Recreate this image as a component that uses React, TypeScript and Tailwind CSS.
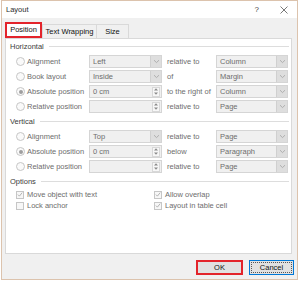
import React from 'react';

const labelCls = 'text-[#6d6d6d]';

function Chevron() {
    return (
        <svg width="7" height="5" viewBox="0 0 7 5">
            <path d="M1 1.2 L3.5 3.6 L6 1.2" fill="none" stroke="#a8a8a8" strokeWidth="0.9" />
        </svg>
    );
}

function Spinner() {
    return (
        <svg width="6" height="9" viewBox="0 0 6 9">
            <path d="M1 3.5 L3 1.2 L5 3.5 Z" fill="#8a8a8a" />
            <path d="M1 5.5 L3 7.8 L5 5.5 Z" fill="#8a8a8a" />
        </svg>
    );
}

function Select({ value, width }: { value: string; width: string }) {
    return (
        <div className={`${width} h-[13px] border border-[#d5d5d5] bg-[#f0f0f0] flex`}>
            <span className={`flex-1 pl-[3px] leading-[11px] ${labelCls}`}>{value}</span>
            <div className="w-[11px] h-[11px] bg-[#dedede] border-l border-[#d0d0d0] flex items-center justify-center">
                <Chevron />
            </div>
        </div>
    );
}

function SpinInput({ value }: { value: string }) {
    return (
        <div className="w-[73px] h-[13px] border border-[#d5d5d5] bg-[#f0f0f0] flex">
            <span className={`flex-1 pl-[3px] leading-[11px] ${labelCls}`}>{value}</span>
            <div className="w-[11px] h-[11px] flex items-center justify-center">
                <div className="w-[8px] h-[10px] border border-[#d8d8d8] bg-[#f7f7f7] flex items-center justify-center">
                    <Spinner />
                </div>
            </div>
        </div>
    );
}

function Radio({ checked }: { checked?: boolean }) {
    return (
        <div className="w-[9px] h-[9px] rounded-full border border-[#c6c6c6] bg-[#fafafa] flex items-center justify-center">
            {checked && <div className="w-[4px] h-[4px] rounded-full bg-[#9f9f9f]" />}
        </div>
    );
}

function Check({ checked }: { checked?: boolean }) {
    return (
        <div className="w-[8px] h-[8px] border border-[#c6c6c6] bg-[#f7f7f7] flex items-center justify-center">
            {checked && (
                <svg width="7" height="7" viewBox="0 0 7 7">
                    <path d="M1 3.6 L2.8 5.4 L6 1.4" fill="none" stroke="#a0a0a0" strokeWidth="0.9" />
                </svg>
            )}
        </div>
    );
}

function Header({ title }: { title: string }) {
    return (
        <div className="h-[15px] flex items-center pl-[4px] pr-[2px]">
            <span className="text-[#3b3b3b]">{title}</span>
            <div className="flex-1 h-px bg-[#dddddd] ml-[5px]" />
        </div>
    );
}

function Row({ label, checked, field, middle, right }: { label: string; checked?: boolean; field: React.ReactNode; middle: string; right: string }) {
    return (
        <div className="h-[15px] flex items-center pl-[10px]">
            <div className="w-[73px] flex items-center gap-[2px]">
                <Radio checked={checked} />
                <span className={labelCls}>{label}</span>
            </div>
            {field}
            <div className={`w-[54px] pl-[5px] ${labelCls}`}>{middle}</div>
            <Select value={right} width="w-[72px]" />
        </div>
    );
}

export default function App() {
    return (
        <div className="w-[300px] h-[281px] bg-white text-[7.5px] leading-none" style={{ fontFamily: '"Liberation Sans", Arial, sans-serif' }}>
            <div className="ml-[1px] w-[297px] h-[280px] border border-[#dcc3ad] bg-[#f0f0f0] flex flex-col">
                {/* Title bar */}
                <div className="h-[17px] bg-white flex items-center pl-[4px]">
                    <span className="text-[#2b2b2b]">Layout</span>
                    <span className="ml-auto text-[#444] text-[8px]">?</span>
                    <svg className="ml-[21px] mr-[9px]" width="8" height="8" viewBox="0 0 8 8">
                        <path d="M0.5 0.5 L7.5 7.5 M7.5 0.5 L0.5 7.5" stroke="#555" strokeWidth="0.8" />
                    </svg>
                </div>

                {/* Tabs */}
                <div className="mt-[5px] h-[15px] flex items-end pl-[3px]">
                    <div className="w-[37px] h-[16px] border-2 border-[#e3242b] bg-white flex items-center justify-center text-[#111] relative z-10">
                        Position
                    </div>
                    <div className="w-[55px] h-[14px] border border-b-0 border-[#d9d9d9] bg-[#f0f0f0] flex items-center justify-center text-[#111]">
                        Text Wrapping
                    </div>
                    <div className="w-[32px] h-[14px] border border-b-0 border-l-0 border-[#d9d9d9] bg-[#f0f0f0] flex items-center justify-center text-[#111]">
                        Size
                    </div>
                </div>

                {/* Panel */}
                <div className="ml-[3px] w-[287px] h-[216px] border border-[#d9d9d9] bg-white flex flex-col">
                    <Header title="Horizontal" />
                    <Row label="Alignment" field={<Select value="Left" width="w-[73px]" />} middle="relative to" right="Column" />
                    <Row label="Book layout" field={<Select value="Inside" width="w-[73px]" />} middle="of" right="Margin" />
                    <Row label="Absolute position" checked field={<SpinInput value="0 cm" />} middle="to the right of" right="Column" />
                    <Row label="Relative position" field={<SpinInput value="" />} middle="relative to" right="Page" />

                    <Header title="Vertical" />
                    <Row label="Alignment" field={<Select value="Top" width="w-[73px]" />} middle="relative to" right="Page" />
                    <Row label="Absolute position" checked field={<SpinInput value="0 cm" />} middle="below" right="Paragraph" />
                    <Row label="Relative position" field={<SpinInput value="" />} middle="relative to" right="Page" />

                    <Header title="Options" />
                    <div className="h-[11px] flex items-center pl-[10px]">
                        <div className="w-[138px] flex items-center gap-[3px]">
                            <Check checked />
                            <span className={labelCls}>Move object with text</span>
                        </div>
                        <div className="flex items-center gap-[3px]">
                            <Check checked />
                            <span className={labelCls}>Allow overlap</span>
                        </div>
                    </div>
                    <div className="h-[11px] flex items-center pl-[10px]">
                        <div className="w-[138px] flex items-center gap-[3px]">
                            <Check />
                            <span className={labelCls}>Lock anchor</span>
                        </div>
                        <div className="flex items-center gap-[3px]">
                            <Check checked />
                            <span className={labelCls}>Layout in table cell</span>
                        </div>
                    </div>
                </div>

                {/* Buttons */}
                <div className="mt-[6px] flex justify-end gap-[6px] pr-[3px]">
                    <div className="w-[47px] h-[15px] border-2 border-[#e3242b] bg-[#e1e1e1] flex items-center justify-center text-[#111]">
                        OK
                    </div>
                    <div className="w-[45px] h-[15px] border border-[#0078d7] bg-[#e1e1e1] p-[1px]">
                        <div className="w-full h-full border border-dotted border-[#555] flex items-center justify-center text-[#111]">
                            Cancel
                        </div>
                    </div>
                </div>
            </div>
        </div>
    );
}
